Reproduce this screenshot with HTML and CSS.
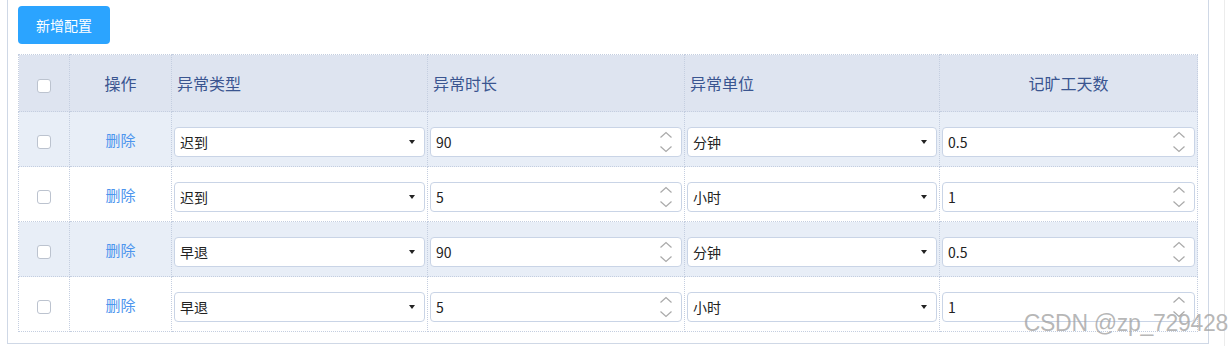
FILE: index.html
```html
<!DOCTYPE html>
<html lang="zh-CN">
  <head>
    <meta charset="UTF-8" />
    <meta name="viewport" content="width=device-width, initial-scale=1.0" />
    <title>异常配置</title>
    <link rel="stylesheet" href="styles.css">
  </head>
  <body>
    <div class="page">
      <div class="panel">
        <button class="btn-add">新增配置</button>

        <!-- Config table -->
        <table class="config-table">
          <colgroup>
            <col style="width:51px">
            <col style="width:102px">
            <col style="width:256px">
            <col style="width:257px">
            <col style="width:255px">
            <col style="width:258px">
          </colgroup>
          <thead>
            <tr>
              <th class="center"><span class="check"></span></th>
              <th class="center">操作</th>
              <th>异常类型</th>
              <th>异常时长</th>
              <th>异常单位</th>
              <th class="center">记旷工天数</th>
            </tr>
          </thead>
          <tbody>
            <tr class="odd">
              <td class="center"><span class="check"></span></td>
              <td class="center"><a class="link-del">删除</a></td>
              <td><div class="field"><span>迟到</span><i class="caret"></i></div></td>
              <td><div class="field"><span>90</span><svg class="spin" width="14" height="22" viewBox="0 0 14 22"><path d="M1.5 6.5 7 1.5 12.5 6.5M1.5 15.5 7 20.5 12.5 15.5" fill="none" stroke="#a9a9a9" stroke-width="1.2"/></svg></div></td>
              <td><div class="field"><span>分钟</span><i class="caret"></i></div></td>
              <td><div class="field"><span>0.5</span><svg class="spin" width="14" height="22" viewBox="0 0 14 22"><path d="M1.5 6.5 7 1.5 12.5 6.5M1.5 15.5 7 20.5 12.5 15.5" fill="none" stroke="#a9a9a9" stroke-width="1.2"/></svg></div></td>
            </tr>
            <tr>
              <td class="center"><span class="check"></span></td>
              <td class="center"><a class="link-del">删除</a></td>
              <td><div class="field"><span>迟到</span><i class="caret"></i></div></td>
              <td><div class="field"><span>5</span><svg class="spin" width="14" height="22" viewBox="0 0 14 22"><path d="M1.5 6.5 7 1.5 12.5 6.5M1.5 15.5 7 20.5 12.5 15.5" fill="none" stroke="#a9a9a9" stroke-width="1.2"/></svg></div></td>
              <td><div class="field"><span>小时</span><i class="caret"></i></div></td>
              <td><div class="field"><span>1</span><svg class="spin" width="14" height="22" viewBox="0 0 14 22"><path d="M1.5 6.5 7 1.5 12.5 6.5M1.5 15.5 7 20.5 12.5 15.5" fill="none" stroke="#a9a9a9" stroke-width="1.2"/></svg></div></td>
            </tr>
            <tr class="odd">
              <td class="center"><span class="check"></span></td>
              <td class="center"><a class="link-del">删除</a></td>
              <td><div class="field"><span>早退</span><i class="caret"></i></div></td>
              <td><div class="field"><span>90</span><svg class="spin" width="14" height="22" viewBox="0 0 14 22"><path d="M1.5 6.5 7 1.5 12.5 6.5M1.5 15.5 7 20.5 12.5 15.5" fill="none" stroke="#a9a9a9" stroke-width="1.2"/></svg></div></td>
              <td><div class="field"><span>分钟</span><i class="caret"></i></div></td>
              <td><div class="field"><span>0.5</span><svg class="spin" width="14" height="22" viewBox="0 0 14 22"><path d="M1.5 6.5 7 1.5 12.5 6.5M1.5 15.5 7 20.5 12.5 15.5" fill="none" stroke="#a9a9a9" stroke-width="1.2"/></svg></div></td>
            </tr>
            <tr>
              <td class="center"><span class="check"></span></td>
              <td class="center"><a class="link-del">删除</a></td>
              <td><div class="field"><span>早退</span><i class="caret"></i></div></td>
              <td><div class="field"><span>5</span><svg class="spin" width="14" height="22" viewBox="0 0 14 22"><path d="M1.5 6.5 7 1.5 12.5 6.5M1.5 15.5 7 20.5 12.5 15.5" fill="none" stroke="#a9a9a9" stroke-width="1.2"/></svg></div></td>
              <td><div class="field"><span>小时</span><i class="caret"></i></div></td>
              <td><div class="field"><span>1</span><svg class="spin" width="14" height="22" viewBox="0 0 14 22"><path d="M1.5 6.5 7 1.5 12.5 6.5M1.5 15.5 7 20.5 12.5 15.5" fill="none" stroke="#a9a9a9" stroke-width="1.2"/></svg></div></td>
            </tr>
          </tbody>
        </table>
      </div>
      <div class="edge"></div>
    </div>
    <div class="watermark">CSDN @zp_729428</div>
  </body>
</html>
```

FILE: styles.css
```css
body {
  margin: 0;
  font-family: "Noto Sans CJK SC", "Noto Sans", sans-serif;
  color: #333;
  background: #fff;
}

.page {
  display: flex;
  height: 346px;
}

.panel {
  box-sizing: border-box;
  width: 1202px;
  height: 344px;
  margin-left: 7px;
  padding: 6px 11px 0 10px;
  border: 1px solid #cfd8e6;
  border-top: none;
}

.edge {
  width: 1px;
  margin-left: 15px;
  background: #ececec;
}

.btn-add {
  display: block;
  width: 92px;
  height: 38px;
  padding: 0;
  border: none;
  border-radius: 4px;
  background: #2ba4ff;
  color: #fff;
  font-family: inherit;
  font-size: 14px;
}

.config-table {
  margin-top: 10px;
  width: 1179px;
  table-layout: fixed;
  border-collapse: collapse;
  border: 1px dotted #c4cee0;
}

.config-table th,
.config-table td {
  border: 1px dotted #c4cee0;
  padding: 0 2px;
  text-align: left;
  vertical-align: middle;
}

.config-table th {
  height: 56px;
  padding-left: 5px;
  background: #dee4f0;
  color: #3a5590;
  font-size: 16px;
  font-weight: normal;
}

.config-table td {
  height: 55px;
  padding-top: 6px;
  box-sizing: border-box;
}

.config-table tr.odd td {
  background: #e8eef7;
}

.config-table .center {
  text-align: center;
  padding-left: 0;
  padding-right: 0;
}

.config-table td.center {
  padding-top: 0;
}

.check {
  display: inline-block;
  width: 12px;
  height: 12px;
  border: 1px solid #bcc3cf;
  border-radius: 3px;
  background: #fff;
  vertical-align: middle;
}

.link-del {
  color: #4d95ee;
  font-size: 15px;
}

.field {
  box-sizing: border-box;
  height: 30px;
  display: flex;
  align-items: center;
  justify-content: space-between;
  padding: 0 8px 0 5px;
  border: 1px solid #c9d4e6;
  border-radius: 4px;
  background: #fff;
  font-size: 14px;
  color: #222;
}

.caret {
  width: 0;
  height: 0;
  margin-right: 1px;
  border-left: 3.5px solid transparent;
  border-right: 3.5px solid transparent;
  border-top: 4px solid #222;
}

.spin {
  display: block;
}

.watermark {
  position: absolute;
  right: 4px;
  top: 310px;
  font-family: "Liberation Sans", Arial, sans-serif;
  font-size: 23px;
  letter-spacing: -0.3px;
  color: rgba(160, 160, 160, 0.75);
}
```
